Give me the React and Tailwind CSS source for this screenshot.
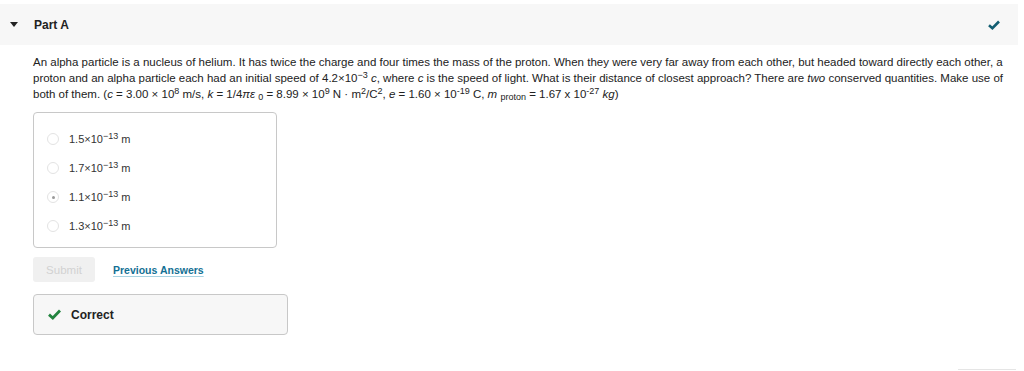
import React, { useState } from 'react';

const options = [
  { id: 'a', base: '1.5×10', exp: '−13' },
  { id: 'b', base: '1.7×10', exp: '−13' },
  { id: 'c', base: '1.1×10', exp: '−13' },
  { id: 'd', base: '1.3×10', exp: '−13' },
];

function Sup({ children }) {
  return <sup className="text-[9px]">{children}</sup>;
}

function Sub({ children }) {
  return <sub className="text-[9px]">{children}</sub>;
}

export default function App() {
  const [selected, setSelected] = useState('c');

  return (
    <div className="w-[1024px] h-[371px] bg-white overflow-hidden text-[#222]" style={{ fontFamily: '"Liberation Sans", Arial, sans-serif' }}>
      {/* Part header */}
      <div className="mt-[4px] w-[1018px] h-[41px] bg-[#f7f7f7] flex items-center">
        <svg className="ml-[10px]" width="8" height="5" viewBox="0 0 8 5">
          <path d="M0 0 L8 0 L4 5 Z" fill="#222" />
        </svg>
        <span className="ml-[16px] text-[12px] font-bold text-[#222]">Part A</span>
        <svg className="ml-auto mr-[18px]" width="12" height="10" viewBox="0 0 12 10">
          <path d="M1 5.2 L4.4 8.2 L11 1.5" stroke="#135e72" strokeWidth="2.6" fill="none" />
        </svg>
      </div>

      {/* Question */}
      <div className="pl-[33px] pr-[20px] pt-[9px] text-[11.5px] leading-[16px] text-[#222]">
        <p className="w-[972px]">
          An alpha particle is a nucleus of helium. It has twice the charge and four times the mass of the proton. When they were very far away from each other, but headed toward directly each other, a proton and an alpha particle each had an initial speed of 4.2×10<Sup>−3</Sup> <i>c</i>, where <i>c</i> is the speed of light. What is their distance of closest approach? There are <i>two</i> conserved quantities. Make use of both of them. (<i>c</i> = 3.00 × 10<Sup>8</Sup> m/s, <i>k</i> = 1/4<i>πε</i> <Sub>0</Sub> = 8.99 × 10<Sup>9</Sup> N · m<Sup>2</Sup>/C<Sup>2</Sup>, <i>e</i> = 1.60 × 10<Sup>-19</Sup> C, <i>m</i> <Sub>proton</Sub> = 1.67 x 10<Sup>-27</Sup> <i>kg</i>)
        </p>

        {/* Options */}
        <div className="mt-[10px] w-[244px] h-[136px] border border-[#c8c8c8] rounded-[4px] pt-[18px] pl-[13px] flex flex-col gap-[13px]">
          {options.map((o) => (
            <label key={o.id} className="flex items-center h-[16px] cursor-pointer" onClick={() => setSelected(o.id)}>
              <span className="w-[12px] h-[12px] rounded-full border border-[#e3e3e3] bg-white flex items-center justify-center">
                {selected === o.id && <span className="w-[3px] h-[3px] rounded-full bg-[#999]" />}
              </span>
              <span className="ml-[10px] text-[11px] text-[#333]">
                {o.base}<sup className="text-[9px]">{o.exp}</sup> m
              </span>
            </label>
          ))}
        </div>

        {/* Actions */}
        <div className="mt-[9px] flex items-center">
          <button className="w-[62px] h-[25px] bg-[#f0f0f0] rounded-[3px] text-[11.5px] text-[#d2d2d2]" disabled>Submit</button>
          <a href="#" className="ml-[18px] text-[10.5px] font-bold text-[#137094] underline decoration-[#a9d3e2] underline-offset-[2px]">Previous Answers</a>
        </div>

        {/* Feedback */}
        <div className="mt-[12px] w-[255px] h-[41px] bg-[#f7f7f7] border border-[#c8c8c8] rounded-[4px] flex items-center">
          <svg className="ml-[14px]" width="13" height="11" viewBox="0 0 13 11">
            <path d="M1 5.6 L4.8 9 L12 1.6" stroke="#23843f" strokeWidth="2.8" fill="none" />
          </svg>
          <span className="ml-[10px] text-[12px] font-bold text-[#222]">Correct</span>
        </div>
      </div>

      <div className="ml-[958px] mt-[34px] w-[58px] h-[1px] bg-[#e5e5e5]" />
    </div>
  );
}
